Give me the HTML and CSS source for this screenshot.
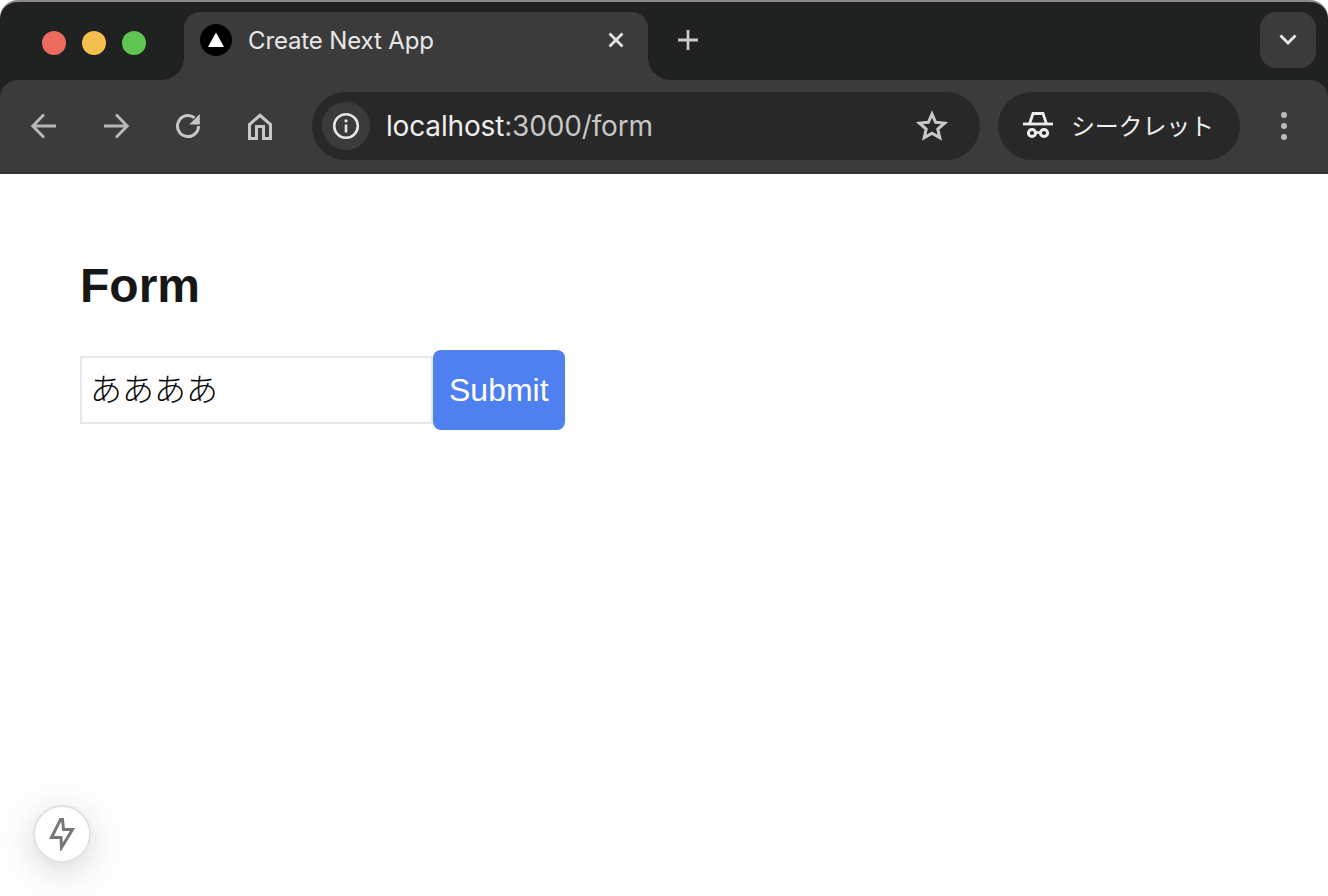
FILE: index.html
```html
<!DOCTYPE html>
<html lang="ja">
<head>
<meta charset="utf-8">
<title>Create Next App</title>
<link rel="stylesheet" href="styles.css">
</head>
<body>
<div class="chrome">
  <div class="tabbar">
    <div class="lights">
      <span class="light red"></span>
      <span class="light yellow"></span>
      <span class="light green"></span>
    </div>
    <div class="tab">
      <svg class="favicon" width="32" height="32" viewBox="0 0 32 32"><circle cx="16" cy="16" r="16" fill="#000"/><path d="M16 8.500 24 23H8z" fill="#fff"/></svg>
      <span class="tab-title">Create Next App</span>
      <svg class="tab-close" width="20" height="20" viewBox="0 0 20 20"><path d="M3.500 3.500l13 13M16.500 3.500l-13 13" stroke="#e4e4e4" stroke-width="2.800" fill="none"/></svg>
    </div>
    <svg class="new-tab" width="48" height="48" viewBox="0 0 48 48"><path d="M24 14v20M14 24h20" stroke="#c7c7c7" stroke-width="2.800" fill="none"/></svg>
    <div class="tab-menu">
      <svg width="20" height="20" viewBox="0 0 20 20"><path d="M2.500 5.500 10 13l7.500-7.500" stroke="#ececec" stroke-width="2.800" fill="none"/></svg>
    </div>
  </div>
  <div class="toolbar">
    <div class="nav-btn">
      <svg width="28" height="28" viewBox="0 0 28 28"><path d="M26 14H3.500M14 2.500 2.800 14 14 25.500" stroke="#b8b8b8" stroke-width="3" fill="none"/></svg>
    </div>
    <div class="nav-btn">
      <svg width="28" height="28" viewBox="0 0 28 28"><path d="M2 14h22.500M14 2.500 25.200 14 14 25.500" stroke="#b8b8b8" stroke-width="3" fill="none"/></svg>
    </div>
    <div class="nav-btn">
      <svg width="28" height="28" viewBox="0 0 28 28"><path d="M24.500 14A10.500 10.500 0 1 1 20.500 5.800" stroke="#c6c6c6" stroke-width="3" fill="none"/><path d="M25.800 2v10.500H15.300z" fill="#c6c6c6"/></svg>
    </div>
    <div class="nav-btn">
      <svg width="28" height="28" viewBox="0 0 28 28"><path d="M3.500 26.500V12.500L14 3.300l10.500 9.200v14h-7v-12h-7v12z" stroke="#c8c8c8" stroke-width="3" fill="none"/></svg>
    </div>
    <div class="omnibox">
      <div class="info">
        <svg width="28" height="28" viewBox="0 0 28 28"><circle cx="14" cy="14" r="11.800" stroke="#e6e6e6" stroke-width="2.600" fill="none"/><path d="M14 12.500v8" stroke="#e6e6e6" stroke-width="2.600"/><circle cx="14" cy="8.800" r="1.600" fill="#e6e6e6"/></svg>
      </div>
      <div class="url"><span class="url-host">localhost</span><span class="url-path">:3000/form</span></div>
      <svg class="star" width="32" height="32" viewBox="0 0 32 32"><path d="M16 4l3.600 8.300 9 .8-6.800 5.900 2 8.800L16 23.200l-7.800 4.600 2-8.800-6.800-5.900 9-.8z" stroke="#c8c8c8" stroke-width="3" fill="none"/></svg>
    </div>
    <div class="incognito">
      <svg width="30" height="28" viewBox="0 0 30 28"><path d="M0 12h30" stroke="#ececec" stroke-width="2.800"/><path d="M6.500 12 10 1.500h10L23.500 12" stroke="#ececec" stroke-width="2.800" fill="none"/><circle cx="9" cy="21" r="3.600" stroke="#ececec" stroke-width="3" fill="none"/><circle cx="21" cy="21" r="3.600" stroke="#ececec" stroke-width="3" fill="none"/><path d="M12 20.500h6" stroke="#ececec" stroke-width="2.600"/></svg>
      <span class="incognito-label">シークレット</span>
    </div>
    <div class="more">
      <span class="dot"></span><span class="dot"></span><span class="dot"></span>
    </div>
  </div>
</div>
<main class="page">
  <h1 class="title">Form</h1>
  <form class="form">
    <input class="text-input" type="text" value="ああああ">
    <button class="submit" type="button">Submit</button>
  </form>
</main>
<div class="dev-indicator">
  <svg width="30" height="34" viewBox="0 0 30 34"><path d="M13.500 2.500 4.500 20.500H14L14.500 30.500 25.500 12.500H16.500L15.500 2.500z" stroke="#777" stroke-width="3" fill="none"/></svg>
</div>
</body>
</html>
```
FILE: styles.css
```css
* { box-sizing: border-box; }
html, body { margin: 0; height: 100%; background: #fff; overflow: hidden; }
body { font-family: "Liberation Sans", "Noto Sans CJK JP", sans-serif; color: #171717; }

.chrome { height: 174px; display: flex; flex-direction: column; background: #202221; border-radius: 18px 18px 0 0; border-top: 2px solid #8a8a8a; }
.tabbar { height: 78px; display: flex; align-items: flex-start; padding-top: 10px; }
.lights { width: 184px; height: 58px; display: flex; align-items: center; gap: 16px; padding: 3px 0 0 42px; }
.light { width: 24px; height: 24px; border-radius: 50%; }
.red { background: #ec6a5e; }
.yellow { background: #f4bf4f; }
.green { background: #61c554; }

.tab { position: relative; width: 464px; height: 68px; background: #3b3b3b; border-radius: 16px 16px 0 0; display: flex; align-items: center; padding: 0 22px 12px 16px; }
.tab::before, .tab::after { content: ""; position: absolute; bottom: 0; width: 22px; height: 22px; }
.tab::before { left: -22px; background: radial-gradient(circle at 0 0, #202221 21.500px, #3b3b3b 22px); }
.tab::after { right: -22px; background: radial-gradient(circle at 100% 0, #202221 21.500px, #3b3b3b 22px); }
.favicon { flex: none; }
.tab-title { flex: 1; margin-left: 16px; font: 400 24px "Inter", sans-serif; letter-spacing: -0.14px; color: #e8e8e8; }
.tab-close { flex: none; }
.new-tab { flex: none; margin: 4px 0 0 16px; }
.tab-menu { margin: 0 12px 0 auto; width: 56px; height: 56px; border-radius: 16px; background: #3b3b3b; display: flex; align-items: center; justify-content: center; }

.toolbar { height: 94px; background: #3b3b3b; border-radius: 18px 18px 0 0; border-bottom: 2px solid #333; display: flex; align-items: flex-start; padding: 12px 0 0 8px; }
.nav-btn { width: 72px; height: 68px; display: flex; align-items: center; justify-content: center; flex: none; }
.omnibox { margin-left: 16px; flex: 1; height: 68px; border-radius: 34px; background: #282828; display: flex; align-items: center; padding: 0 32px 0 10px; }
.info { width: 48px; height: 48px; border-radius: 50%; background: #3b3b3b; display: flex; align-items: center; justify-content: center; flex: none; }
.url { flex: 1; margin-left: 16px; font: 400 28px "Inter", sans-serif; letter-spacing: -0.16px; white-space: nowrap; }
.url-host { color: #eeeeee; }
.url-path { color: #c6c6c6; }
.star { flex: none; }
.incognito { margin-left: 18px; width: 242px; height: 68px; border-radius: 34px; background: #282828; display: flex; align-items: center; padding-left: 25px; flex: none; }
.incognito-label { margin-left: 18px; padding-bottom: 4px; font: 400 24px "Noto Sans CJK JP", sans-serif; letter-spacing: -0.2px; color: #f0f0f0; white-space: nowrap; }
.more { width: 88px; height: 68px; display: flex; flex-direction: column; align-items: center; justify-content: center; gap: 5px; flex: none; }
.dot { width: 6px; height: 6px; border-radius: 50%; background: #bcbcbc; }

.page { padding: 80px; }
.title { margin: 0 0 32px; font-size: 48px; line-height: 64px; font-weight: 700; color: #171717; }
.form { display: flex; align-items: center; }
.text-input { width: 353px; height: 68px; border: 2px solid #e5e7eb; padding: 0 8px 6px; margin: 0; font: 300 32px "Noto Sans CJK JP", sans-serif; color: #0a0a0a; background: #fff; outline: none; border-radius: 0; }
.submit { height: 80px; padding: 0 16px; border: 0; border-radius: 8px; background: #4f80ef; color: #fff; font: 400 32px "Liberation Sans", sans-serif; }

.dev-indicator { position: absolute; left: 33px; top: 805px; width: 58px; height: 58px; border-radius: 50%; background: #fff; border: 2px solid #e2e2e2; display: flex; align-items: center; justify-content: center; box-shadow: 0 8px 24px rgba(0,0,0,.1), 0 8px 70px 12px rgba(0,0,0,.06); }
```
